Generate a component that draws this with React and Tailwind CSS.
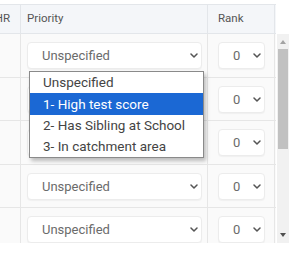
import React from "react";

const Chevron = () => (
  <svg width="8" height="5" viewBox="0 0 8 5" fill="none">
    <path d="M1 1 L4 4 L7 1" stroke="#555" strokeWidth="1.5" strokeLinecap="round" strokeLinejoin="round" />
  </svg>
);

const rowHeights = ["h-[44px]", "h-[43px]", "h-[44px]", "h-[43px]", "h-[44px]"];

function Row({ h }) {
  return (
    <div className={`flex ${h} border-b border-[#e6e6e6] bg-[#fafafa]`}>
      <div className="w-[40px] -ml-[19px] border-r border-[#e6e6e6]" />
      <div className="w-[187px] border-r border-[#e6e6e6] pl-[6px] pt-[8px]">
        <div className="flex h-[27px] w-[175px] items-center justify-between rounded-[4px] border border-[#ececec] bg-white pl-[14px] pr-[3px] shadow-[0_1px_1px_rgba(0,0,0,0.04)]">
          <span className="text-[13px] text-[#6b6b6b]">Unspecified</span>
          <Chevron />
        </div>
      </div>
      <div className="w-[67px] border-r border-[#e6e6e6] pl-[10px] pt-[8px]">
        <div className="flex h-[27px] w-[47px] items-center justify-between rounded-[4px] border border-[#ececec] bg-white pl-[14px] pr-[3px] shadow-[0_1px_1px_rgba(0,0,0,0.04)]">
          <span className="text-[13px] text-[#6b6b6b]">0</span>
          <Chevron />
        </div>
      </div>
    </div>
  );
}

export default function App() {
  return (
    <div className="relative h-[256px] w-[300px] overflow-hidden bg-white pt-[4px]" style={{ fontFamily: "Roboto, 'Liberation Sans', sans-serif" }}>
      <div className="flex h-[30px] w-[276px] border-y border-[#e3e6ea] bg-[#f4f6f9] text-[11.5px] text-[#555]">
        <div className="flex w-[40px] -ml-[19px] items-center justify-end border-r border-[#e3e6ea] pr-[10px]">HR</div>
        <div className="flex w-[187px] items-center border-r border-[#e3e6ea] pl-[6px]">Priority</div>
        <div className="flex w-[67px] items-center border-r border-[#e3e6ea] pl-[10px]">Rank</div>
      </div>
      <div className="flex h-[209px]">
        <div className="w-[276px] overflow-hidden">
          {rowHeights.map((h, i) => (
            <Row key={i} h={h} />
          ))}
        </div>
        <div className="ml-[1px] flex w-[12px] flex-col items-center bg-[#f1f1f1]">
          <div className="mt-[6px] h-0 w-0 border-x-[3.5px] border-b-[4px] border-x-transparent border-b-[#a3a3a3]" />
          <div className="mt-[5px] h-[100px] w-[10px] bg-[#c1c1c1]" />
          <div className="flex-1" />
          <div className="mb-[6px] h-0 w-0 border-x-[3.5px] border-t-[4px] border-x-transparent border-t-[#505050]" />
        </div>
      </div>

      <div className="absolute left-[29px] top-[71px] w-[175px] border border-[#8a8a8a] bg-white text-[13.5px] text-[#444] shadow-[2px_3px_4px_rgba(0,0,0,0.25)]">
        <div className="flex h-[21px] items-center pl-[13px]">Unspecified</div>
        <div className="flex h-[22px] items-center bg-[#1b68d4] pl-[13px] text-white">1- High test score</div>
        <div className="flex h-[21px] items-center pl-[13px]">2- Has Sibling at School</div>
        <div className="flex h-[21px] items-center pl-[13px]">3- In catchment area</div>
      </div>
    </div>
  );
}
